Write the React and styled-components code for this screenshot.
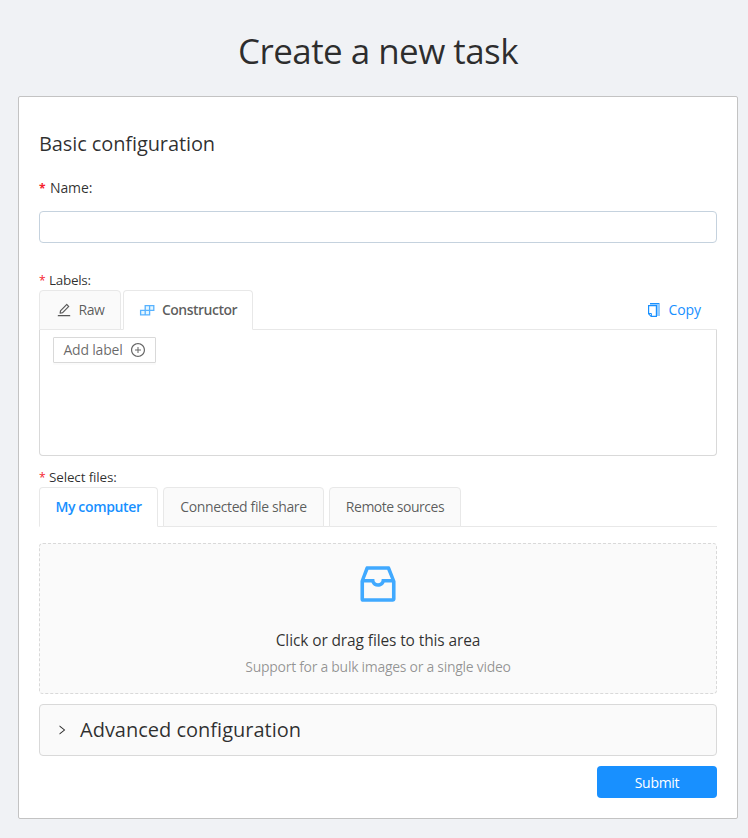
import React, { useState } from "react";
import styled, { createGlobalStyle } from "styled-components";
import {
  AiOutlineEdit,
  AiOutlineInbox,
  AiOutlinePlusCircle,
  AiOutlineRight,
} from "react-icons/ai";

const fileTabs = [
  { id: "local", title: "My computer", width: 119, spacing: "-0.36px" },
  { id: "share", title: "Connected file share", width: 161, spacing: "-0.38px" },
  { id: "remote", title: "Remote sources", width: 132, spacing: "-0.48px" },
];

function BuildIcon() {
  return (
    <svg width="16" height="16" viewBox="0 0 16 16" fill="none">
      <path d="M6.2 3.6h8.6v4.7H10.6v4.6H1.6V8.3h4.6z" fill="#e6f7ff" />
      <path d="M6.2 8.3V3.6h8.6v4.7H1.6v4.6h9V3.6M6.2 8.3v4.6" stroke="#58b2ff" strokeWidth="1.3" />
    </svg>
  );
}

function CopyIcon() {
  return (
    <svg width="16" height="16" viewBox="0 0 16 16" fill="none">
      <path d="M4 2h10v12h-3V4H4z" fill="#91caff" />
      <path d="M4 1.5h9.5" stroke="#1890ff" />
      <path d="M2.6 3.6h7.8v10.8H5.2l-2.6-2.6z" fill="#fff" stroke="#1890ff" strokeWidth="1.2" />
      <path d="M2.6 11.5h2.8v2.9" stroke="#1890ff" />
    </svg>
  );
}

function App() {
  const [name, setName] = useState("");
  const [labelMode, setLabelMode] = useState("constructor");
  const [source, setSource] = useState("local");

  return (
    <Page>
      <GlobalStyle />
      <Title>Create a new task</Title>
      <Card>
        <SectionTitle>Basic configuration</SectionTitle>
        <NameLabel htmlFor="name">
          <Required $bold>*</Required>
          <span>Name:</span>
        </NameLabel>
        <NameInput id="name" value={name} onChange={(e) => setName(e.target.value)} />

        <FieldLabel>
          <Required>*</Required>
          <span>Labels:</span>
        </FieldLabel>
        <TabBar $gap={2}>
          <Tab $width={82} $active={labelMode === "raw"} onClick={() => setLabelMode("raw")}>
            <AiOutlineEdit size={16} />
            <TabText $spacing="-0.5px">Raw</TabText>
          </Tab>
          <Tab
            $width={130}
            $active={labelMode === "constructor"}
            onClick={() => setLabelMode("constructor")}
          >
            <BuildIcon />
            <TabText $spacing="-0.5px">Constructor</TabText>
          </Tab>
          <CopyButton>
            <CopyIcon />
            <TabText $spacing="-0.1px">Copy</TabText>
          </CopyButton>
        </TabBar>
        <LabelsPanel>
          <AddLabel>
            <span>Add label</span>
            <AiOutlinePlusCircle size={16} />
          </AddLabel>
        </LabelsPanel>

        <FieldLabel $files>
          <Required>*</Required>
          <span>Select files:</span>
        </FieldLabel>
        <TabBar $gap={5}>
          {fileTabs.map((tab) => (
            <Tab
              key={tab.id}
              $width={tab.width}
              $active={source === tab.id}
              $blue={source === tab.id}
              onClick={() => setSource(tab.id)}
            >
              <TabText $spacing={tab.spacing}>{tab.title}</TabText>
            </Tab>
          ))}
        </TabBar>
        <Dragger>
          <AiOutlineInbox />
          <DraggerText>Click or drag files to this area</DraggerText>
          <DraggerHint>Support for a bulk images or a single video</DraggerHint>
        </Dragger>

        <Advanced>
          <AiOutlineRight />
          <span>Advanced configuration</span>
        </Advanced>
        <Submit>Submit</Submit>
      </Card>
    </Page>
  );
}

const GlobalStyle = createGlobalStyle`
  * {
    box-sizing: border-box;
  }
  body {
    margin: 0;
    background: #f0f2f5;
    font-family: "Open Sans", "Noto Sans", sans-serif;
    font-size: 14px;
    color: rgba(0, 0, 0, 0.82);
  }
  button, input {
    font: inherit;
  }
`;

const Page = styled.div`
  height: 838px;
  padding: 24px 10px 19px 18px;
  background: #f0f2f5;
`;

const Title = styled.h1`
  margin: 0 0 18px;
  height: 54px;
  line-height: 54px;
  font-size: 35px;
  font-weight: 400;
  letter-spacing: -0.55px;
  text-align: center;
`;

const Card = styled.div`
  height: 723px;
  padding: 32px 20px 20px;
  display: flex;
  flex-direction: column;
  background: #fff;
  border: 1px solid #c3c3c3;
  border-radius: 2px;
`;

const SectionTitle = styled.h2`
  margin: 0 0 18px;
  height: 30px;
  line-height: 30px;
  font-size: 20px;
  font-weight: 400;
  letter-spacing: -0.1px;
`;

const NameLabel = styled.label`
  display: flex;
  gap: 6px;
  height: 22px;
  line-height: 22px;
  letter-spacing: -0.1px;
`;

const Required = styled.span`
  width: 5px;
  padding-top: 1px;
  color: #f5222d;
  font-size: 12px;
  font-weight: ${(p) => (p.$bold ? 700 : 400)};
`;

const NameInput = styled.input`
  margin-top: 12px;
  height: 32px;
  padding: 4px 11px;
  border: 1px solid #c5d2de;
  border-radius: 4px;
  outline: none;
`;

const FieldLabel = styled.div`
  display: flex;
  gap: 5px;
  height: 22px;
  line-height: 22px;
  margin-top: ${(p) => (p.$files ? "10px" : "26px")};
  font-size: 13.5px;
  letter-spacing: ${(p) => (p.$files ? "-0.15px" : "-0.3px")};
`;

const TabBar = styled.div`
  display: flex;
  flex-shrink: 0;
  gap: ${(p) => p.$gap}px;
  height: 40px;
  margin-top: -1px;
  box-shadow: inset 0 -1px #e8e8e8;
`;

const Tab = styled.button`
  width: ${(p) => p.$width}px;
  display: flex;
  align-items: center;
  justify-content: center;
  gap: 7px;
  padding: 0;
  cursor: pointer;
  color: ${(p) => (p.$blue ? "#1890ff" : "rgba(0, 0, 0, 0.65)")};
  font-weight: ${(p) => (p.$active ? 600 : 400)};
  background: ${(p) => (p.$active ? "#fff" : "#fafafa")};
  border: 1px solid #e8e8e8;
  border-bottom-color: ${(p) => (p.$active ? "#fff" : "#e8e8e8")};
  border-radius: 4px 4px 0 0;
`;

const TabText = styled.span`
  padding-bottom: 2px;
  letter-spacing: ${(p) => p.$spacing};
  white-space: nowrap;
`;

const CopyButton = styled.button`
  display: flex;
  align-items: center;
  gap: 7px;
  margin-left: auto;
  padding: 0 16px;
  border: none;
  background: none;
  color: #1890ff;
  cursor: pointer;
`;

const LabelsPanel = styled.div`
  height: 126px;
  padding: 7px 13px;
  border: 1px solid #d9d9d9;
  border-top: none;
  border-radius: 0 0 4px 4px;
`;

const AddLabel = styled.button`
  display: flex;
  align-items: center;
  justify-content: center;
  gap: 7px;
  width: 103px;
  height: 26px;
  padding: 0 0 1px;
  background: #fff;
  border: 1px solid #d9d9d9;
  border-radius: 1px;
  box-shadow: 0 2px 0 rgba(0, 0, 0, 0.015);
  color: rgba(0, 0, 0, 0.6);
  letter-spacing: -0.2px;
  cursor: pointer;
`;

const Dragger = styled.div`
  display: flex;
  flex-direction: column;
  align-items: center;
  height: 151px;
  margin-top: 16px;
  padding-top: 16px;
  background: #fafafa;
  border: 1px dashed #d9d9d9;
  border-radius: 4px;
  svg {
    width: 48px;
    height: 48px;
    color: #40a9ff;
  }
`;

const DraggerText = styled.p`
  margin: 20px 0 4px;
  line-height: 24px;
  font-size: 15.5px;
  letter-spacing: -0.12px;
`;

const DraggerHint = styled.p`
  margin: 0;
  line-height: 22px;
  color: rgba(0, 0, 0, 0.42);
  letter-spacing: -0.29px;
`;

const Advanced = styled.div`
  display: flex;
  align-items: center;
  gap: 12px;
  height: 52px;
  margin-top: 10px;
  padding-left: 16px;
  background: #fafafa;
  border: 1px solid #d9d9d9;
  border-radius: 4px;
  font-size: 20px;
  letter-spacing: 0;
  span {
    padding-bottom: 2px;
  }
  svg {
    width: 12px;
    height: 12px;
  }
`;

const Submit = styled.button`
  align-self: flex-end;
  width: 120px;
  height: 32px;
  margin-top: 10px;
  background: #1890ff;
  border: none;
  border-radius: 4px;
  color: #fff;
  letter-spacing: -0.3px;
  cursor: pointer;
`;

export default App;
